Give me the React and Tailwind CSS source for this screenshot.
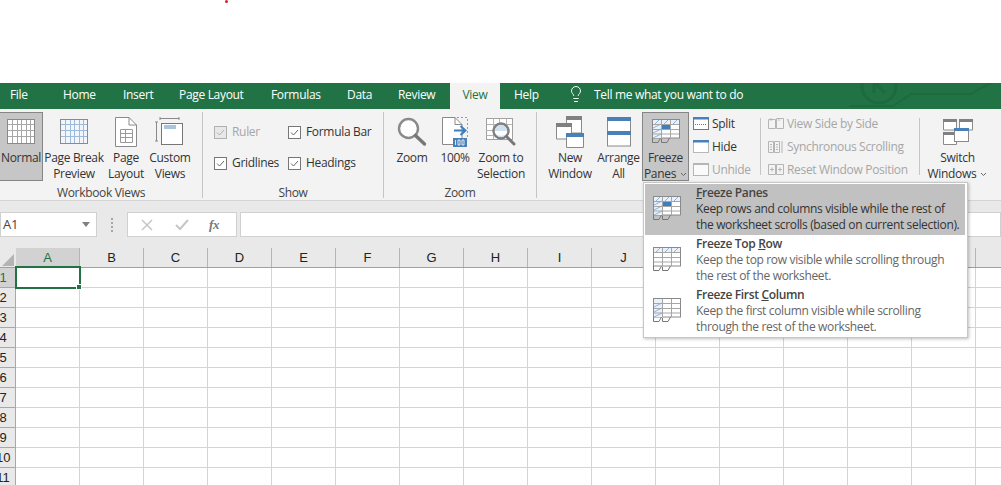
import React from "react";
import { Lightbulb } from "lucide-react";

const columns = ["A", "B", "C", "D", "E", "F", "G", "H", "I", "J", "K", "L", "M", "N", "O", ""];
const rows = [1, 2, 3, 4, 5, 6, 7, 8, 9, 10, 11];
const tabs = [
  { label: "File", width: "w-[53px]" },
  { label: "Home", width: "w-[60px]" },
  { label: "Insert", width: "w-[56px]" },
  { label: "Page Layout", width: "w-[92px]" },
  { label: "Formulas", width: "w-[76px]" },
  { label: "Data", width: "w-[51px]" },
  { label: "Review", width: "w-[52px]" },
];

function GridIcon({ blue }) {
  return (
    <svg width="30" height="30" viewBox="0 0 30 30" fill="none">
      <rect x="1.5" y="2.5" width="27" height="24" fill={blue ? "#f2f6fb" : "#fff"} stroke="#8a8a8a" />
      {[7.5, 13.5, 19.5].map((y) => (
        <path key={y} d={`M2 ${y}H28`} stroke={blue ? "#9db9dc" : "#a6a6a6"} />
      ))}
      {[6.5, 11.5, 15.5, 20.5, 24.5].map((x) => (
        <path key={x} d={`M${x} 3V26`} stroke={blue ? "#9db9dc" : "#a6a6a6"} />
      ))}
    </svg>
  );
}

function PageIcon() {
  return (
    <svg width="26" height="32" viewBox="0 0 26 32" fill="none">
      <path d="M2.5 1.5H16L23.5 9V30.5H2.5Z" fill="#fff" stroke="#8a8a8a" />
      <path d="M16 1.5V9H23.5" stroke="#8a8a8a" />
      <path d="M7.5 13.5H19.5V26.5H7.5ZM7.5 17.5H19.5M7.5 21.5H19.5M12.5 13.5V26.5" stroke="#9a9a9a" />
    </svg>
  );
}

function CustomViewsIcon() {
  return (
    <svg width="30" height="30" viewBox="0 0 30 30" fill="none">
      <path d="M1.5 5V24M0 5H3M0 24H3M5 1.5H24M5 0V3M24 0V3" stroke="#8a8a8a" />
      <rect x="6.5" y="6.5" width="21" height="21" fill="#fff" stroke="#777" />
      <rect x="9" y="8" width="12" height="4" fill="#a9c3e3" />
    </svg>
  );
}

function MagnifierIcon() {
  return (
    <svg width="30" height="30" viewBox="0 0 30 30" fill="none">
      <circle cx="11.5" cy="11.5" r="9.5" fill="#fff" stroke="#8a8a8a" strokeWidth="2.4" />
      <path d="M18.5 18.5L27.5 27" stroke="#777" strokeWidth="3.4" strokeLinecap="round" />
    </svg>
  );
}

function HundredIcon() {
  return (
    <svg width="28" height="32" viewBox="0 0 28 32" fill="none">
      <path d="M1.5 1.5H14L21 8.5V28.5H1.5Z" fill="#fff" stroke="#8a8a8a" />
      <path d="M14 1.5V8.5H21" stroke="#8a8a8a" />
      <path d="M16 1.5H26.5V22" stroke="#9a9a9a" strokeDasharray="2 2" />
      <path d="M13 14.5H24M19.5 10L24.5 14.5L19.5 19" stroke="#3f7ebd" strokeWidth="2" />
      <rect x="12" y="22" width="14" height="9" fill="#4a80b8" />
      <path d="M14.5 24V29M17 24H19V29H17ZM21 24H23V29H21Z" stroke="#fff" strokeWidth="0.8" />
    </svg>
  );
}

function ZoomSelectionIcon() {
  return (
    <svg width="32" height="32" viewBox="0 0 32 32" fill="none">
      <rect x="1.5" y="2.5" width="26" height="21" fill="#fff" stroke="#a0a0a0" />
      <path d="M1.5 8.5H27M1.5 14.5H8M1.5 19.5H8M8.5 2.5V23M14.5 2.5V8M21.5 2.5V8" stroke="#b5b5b5" />
      <circle cx="16" cy="15" r="7.5" fill="#cfe0f1" stroke="#808080" strokeWidth="2" />
      <path d="M9.5 15H22.5V16C21 21 11 21 9.5 16Z" fill="#fff" />
      <circle cx="16" cy="15" r="7.5" stroke="#808080" strokeWidth="2" />
      <path d="M21.5 20.5L29 28" stroke="#777" strokeWidth="3" strokeLinecap="round" />
    </svg>
  );
}

function NewWindowIcon() {
  return (
    <svg width="28" height="32" viewBox="0 0 28 32" fill="none">
      <path d="M10.5 3.5H25.5V17H10.5Z" fill="#fff" stroke="#8a8a8a" />
      <rect x="10" y="0" width="16" height="4" fill="#808080" />
      <path d="M0.5 9.5H15.5V23H0.5Z" fill="#fff" stroke="#8a8a8a" />
      <rect x="0" y="7" width="16" height="4" fill="#808080" />
      <path d="M10.5 18.5H27.5V31.5H10.5Z" fill="#fff" stroke="#8a8a8a" />
      <rect x="10" y="17" width="18" height="4" fill="#4a80b8" />
    </svg>
  );
}

function ArrangeIcon() {
  return (
    <svg width="24" height="30" viewBox="0 0 24 30" fill="none">
      <rect x="0.5" y="0.5" width="23" height="28.5" fill="#fff" stroke="#8a8a8a" />
      <rect x="0" y="0" width="24" height="4" fill="#4a80b8" />
      <rect x="0" y="14" width="24" height="4" fill="#4a80b8" />
    </svg>
  );
}

function FreezeIcon({ mode }) {
  const showTop = mode === "panes" || mode === "top";
  const showLeft = mode === "panes" || mode === "first";
  return (
    <svg width="28" height="25" viewBox="0 0 28 25" fill="none">
      <rect x="0.5" y="0.5" width="27" height="18.5" fill="#fff" stroke="#8a8a8a" />
      {showTop && <rect x="1" y="1" width="26" height="4" fill="#eaf1f9" />}
      {showLeft && <rect x="1" y="1" width="9" height="18" fill="#eaf1f9" />}
      {showTop && <path d="M3 5L7 1M12 5L16 1M21 5L25 1" stroke="#8fb1d8" />}
      {showLeft && <path d="M1 9L9 5M1 14L9 10M1 19L9 15" stroke="#8fb1d8" />}
      <path d="M1 5.5H27M1 10.5H27M1 15H27M9.5 1V19M18.5 1V19" stroke="#a6a6a6" />
      {mode === "panes" && <rect x="10" y="6" width="8" height="4" fill="#3f7ebd" />}
      <path d="M0.5 19V23.5H6L8.5 19M9.5 20V23.5H15L17.5 19" stroke="#777" />
    </svg>
  );
}

function SwitchIcon() {
  return (
    <svg width="30" height="26" viewBox="0 0 30 26" fill="none">
      <path d="M0.5 0.5H13.5V11H0.5ZM16.5 0.5H29.5V11H16.5ZM0.5 13.5H13.5V25.5H0.5Z" fill="#fff" stroke="#8a8a8a" />
      <rect x="0" y="0" width="14" height="3" fill="#808080" />
      <rect x="16" y="0" width="14" height="3" fill="#808080" />
      <rect x="0" y="13" width="14" height="3" fill="#808080" />
      <rect x="11.5" y="9.5" width="14" height="13" fill="#fff" stroke="#8a8a8a" />
      <rect x="11" y="9" width="15" height="3" fill="#4a80b8" />
    </svg>
  );
}

function Chevron() {
  return (
    <svg width="7" height="5" viewBox="0 0 7 5" className="inline-block ml-[4px] align-middle" fill="none">
      <path d="M1 1L3.5 3.5L6 1" stroke="#666" />
    </svg>
  );
}

function CheckBox({ label, disabled }) {
  return (
    <div className={`flex items-center gap-[5px] ${disabled ? "text-[#a6a6a6]" : "text-[#333]"}`}>
      <svg width="13" height="13" viewBox="0 0 13 13" fill="none">
        <rect x="0.5" y="0.5" width="12" height="12" fill={disabled ? "#e8e8e8" : "#fff"} stroke={disabled ? "#b0b0b0" : "#777"} />
        <path d="M3 6.5L5.5 9L10 4" stroke={disabled ? "#b0b0b0" : "#666"} />
      </svg>
      <span>{label}</span>
    </div>
  );
}

function BigButton({ icon, width, active, children }) {
  return (
    <div
      className={`${width} h-[69px] shrink-0 flex flex-col items-center text-center leading-[16px] whitespace-nowrap ${
        active ? "bg-[#c6c6c6] border border-[#868686]" : "border border-transparent"
      }`}
    >
      <div className="h-[37px] shrink-0 flex items-center justify-center">{icon}</div>
      <div className="shrink-0">{children}</div>
    </div>
  );
}

function Group({ label, width, children }) {
  return (
    <div className={`${width} shrink-0 h-[86px] mt-[3px] flex flex-col border-r border-[#c6c6c6]`}>
      <div className="h-[69px] shrink-0 flex">{children}</div>
      <div className="shrink-0 text-center text-[#444] leading-[16px] mt-[4px]">{label}</div>
    </div>
  );
}

function SmallRow({ icon, label, disabled }) {
  return (
    <div className={`h-[23px] flex items-center gap-[3px] ${disabled ? "text-[#a6a6a6]" : "text-[#333]"}`}>
      {icon}
      <span>{label}</span>
    </div>
  );
}

function MenuItem({ mode, title, active, lines }) {
  return (
    <div className={`h-[51px] flex pl-[8px] tracking-[-0.34px] ${active ? "bg-[#c1c1c1] text-[#333]" : "text-[#666]"}`}>
      <div className="w-[43px] shrink-0 pt-[12px]">
        <FreezeIcon mode={mode} />
      </div>
      <div className="leading-[16px] pt-[1px]">
        <div className="font-semibold text-[#444]">{title}</div>
        {lines.map((line) => (
          <div key={line} className="whitespace-nowrap">{line}</div>
        ))}
      </div>
    </div>
  );
}

export default function App() {
  return (
    <div className="relative h-[485px] w-[1001px] overflow-hidden bg-white text-[12px] font-['Open_Sans',sans-serif] tracking-[-0.32px]">
      <div className="h-[83px] flex">
        <div className="ml-[225px] w-[3px] h-[3px] rounded-full bg-[#d0202e]" />
      </div>

      {/* tabs */}
      <div className="relative h-[26px] flex bg-[#217346] text-white leading-[24px] overflow-hidden">
        <svg className="absolute right-0 top-0" width="200" height="26" viewBox="0 0 200 26" fill="none">
          <circle cx="78" cy="3" r="17" stroke="#1c6a3e" strokeWidth="3" />
          <path d="M73 -6V10M73 3L82 -4M76 2L84 10" stroke="#1c6a3e" strokeWidth="3" />
          <path d="M48 23H92L110 11H170L196 -4" stroke="#1c6a3e" strokeWidth="2" />
        </svg>
        <div className="w-[10px] shrink-0" />
        {tabs.map((tab) => (
          <div key={tab.label} className={`${tab.width} shrink-0`}>{tab.label}</div>
        ))}
        <div className="w-[50px] shrink-0 bg-[#f3f3f3] text-[#217346] text-center">View</div>
        <div className="w-[67px] shrink-0 pl-[14px]">Help</div>
        <div className="relative flex items-start">
          <Lightbulb size={18} strokeWidth={1.3} className="mt-[2px]" />
          <span className="ml-[9px]">Tell me what you want to do</span>
        </div>
      </div>

      {/* ribbon */}
      <div className="h-[92px] flex bg-[#f3f3f3] text-[#333] border-b border-[#d4d4d4]">
        <Group label="Workbook Views" width="w-[203px]">
          <BigButton width="w-[44px] -ml-[1px]" active icon={<GridIcon />}>Normal</BigButton>
          <BigButton width="w-[62px]" icon={<GridIcon blue />}>Page Break<br />Preview</BigButton>
          <BigButton width="w-[42px]" icon={<PageIcon />}>Page<br />Layout</BigButton>
          <BigButton width="w-[46px]" icon={<CustomViewsIcon />}>Custom<br />Views</BigButton>
        </Group>
        <Group label="Show" width="w-[181px]">
          <div className="grid grid-cols-[74px_90px] gap-y-[13px] pl-[11px] pt-[11px] h-fit">
            <CheckBox label="Ruler" disabled />
            <CheckBox label="Formula Bar" />
            <CheckBox label="Gridlines" />
            <CheckBox label="Headings" />
          </div>
        </Group>
        <Group label="Zoom" width="w-[153px]">
          <BigButton width="w-[44px] ml-[6px]" icon={<MagnifierIcon />}>Zoom</BigButton>
          <BigButton width="w-[42px]" icon={<HundredIcon />}>100%</BigButton>
          <BigButton width="w-[50px]" icon={<ZoomSelectionIcon />}>Zoom to<br />Selection</BigButton>
        </Group>
        <div className="w-[459px] shrink-0 h-[88px] mt-[3px] flex">
          <BigButton width="w-[50px] ml-[8px]" icon={<NewWindowIcon />}>New<br />Window</BigButton>
          <BigButton width="w-[47px]" icon={<ArrangeIcon />}>Arrange<br />All</BigButton>
          <BigButton width="w-[47px]" active icon={<FreezeIcon mode="panes" />}>
            Freeze<br />Panes<Chevron />
          </BigButton>
          <div className="w-[71px] shrink-0 pl-[4px] h-[69px]">
            <SmallRow
              label="Split"
              icon={
                <svg width="16" height="13" viewBox="0 0 16 13" fill="none">
                  <rect x="0.5" y="0.5" width="15" height="12" fill="#fff" stroke="#777" />
                  <rect x="0" y="0" width="16" height="2.5" fill="#4a80b8" />
                  <path d="M2 7.5H14" stroke="#4a80b8" strokeDasharray="1 1" />
                </svg>
              }
            />
            <SmallRow
              label="Hide"
              icon={
                <svg width="16" height="13" viewBox="0 0 16 13" fill="none">
                  <rect x="0.5" y="0.5" width="15" height="12" fill="#fff" stroke="#777" strokeDasharray="1 1" />
                  <rect x="0" y="0" width="16" height="2.5" fill="#4a80b8" />
                </svg>
              }
            />
            <SmallRow
              disabled
              label="Unhide"
              icon={
                <svg width="16" height="13" viewBox="0 0 16 13" fill="none">
                  <rect x="0.5" y="0.5" width="15" height="12" fill="#fafafa" stroke="#b5b5b5" />
                  <rect x="0" y="0" width="16" height="2" fill="#b5b5b5" />
                </svg>
              }
            />
          </div>
          <div className="w-px h-[57px] mt-[6px] shrink-0 bg-[#c6c6c6]" />
          <div className="w-[158px] shrink-0 pl-[7px] h-[69px]">
            <SmallRow
              disabled
              label="View Side by Side"
              icon={
                <svg width="16" height="13" viewBox="0 0 16 13" fill="none">
                  <path d="M0.5 2.5H7.5V11.5H0.5ZM8.5 1.5H15.5V11.5H8.5ZM3 1V4M11 1V4" stroke="#b5b5b5" />
                </svg>
              }
            />
            <SmallRow
              disabled
              label="Synchronous Scrolling"
              icon={
                <svg width="16" height="14" viewBox="0 0 16 14" fill="none">
                  <path d="M0.5 1.5H5.5V12.5H0.5ZM6.5 1.5H11.5V12.5H6.5ZM14 1V13M8 4.5H10M8 7H10M8 9.5H10M2 4.5H4M2 7H4M2 9.5H4" stroke="#b5b5b5" />
                </svg>
              }
            />
            <SmallRow
              disabled
              label="Reset Window Position"
              icon={
                <svg width="16" height="13" viewBox="0 0 16 13" fill="none">
                  <path d="M0.5 1.5H7.5V11.5H0.5ZM8.5 1.5H15.5V11.5H8.5ZM2 6.5H6M10 6.5H14M4 4.5V8.5M12 4.5V8.5" stroke="#b5b5b5" />
                </svg>
              }
            />
          </div>
          <div className="w-px h-[57px] mt-[6px] shrink-0 bg-[#c6c6c6]" />
          <BigButton width="w-[75px]" icon={<SwitchIcon />}>
            Switch<br />Windows<Chevron />
          </BigButton>
          <div className="w-px h-[84px] ml-[1px] bg-[#c6c6c6]" />
        </div>
      </div>

      {/* formula bar */}
      <div className="h-[47px] flex items-center bg-[#e9e9e9]">
        <div className="w-[97px] h-[25px] shrink-0 flex items-center justify-between bg-white border border-[#d0d0d0] pl-[2px] pr-[6px] text-[13px] text-[#444]">
          <span>A1</span>
          <svg width="8" height="5" viewBox="0 0 8 5"><path d="M0 0H8L4 5Z" fill="#808080" /></svg>
        </div>
        <div className="w-[30px] shrink-0 flex flex-col items-center gap-[2px]">
          <span className="w-[2px] h-[2px] bg-[#a6a6a6]" />
          <span className="w-[2px] h-[2px] bg-[#a6a6a6]" />
          <span className="w-[2px] h-[2px] bg-[#a6a6a6]" />
          <span className="w-[2px] h-[2px] bg-[#a6a6a6]" />
        </div>
        <div className="w-[110px] h-[25px] shrink-0 flex items-center bg-white border border-[#d0d0d0] pl-[13px] gap-[22px]">
          <svg width="12" height="12" viewBox="0 0 12 12" fill="none"><path d="M1 1L11 11M11 1L1 11" stroke="#c6c6c6" strokeWidth="1.5" /></svg>
          <svg width="14" height="12" viewBox="0 0 14 12" fill="none"><path d="M1 6L5 10L13 1" stroke="#c6c6c6" strokeWidth="2" /></svg>
          <span className="font-['Liberation_Serif',serif] italic font-bold text-[#777] text-[13px] -ml-[2px]">fx</span>
        </div>
        <div className="ml-[3px] flex-1 h-[25px] bg-white border border-[#d0d0d0]" />
      </div>

      {/* sheet */}
      <div className="font-['Liberation_Sans',sans-serif] text-[13px] tracking-normal">
        <div className="h-[20px] flex bg-[#e9e9e9] border-b border-[#a0a0a0]">
          <div className="w-[16px] shrink-0 flex items-end justify-end pr-[2px] pb-[1px]">
            <svg width="12" height="12" viewBox="0 0 12 12"><path d="M12 0V12H0Z" fill="#b4b4b4" /></svg>
          </div>
          {columns.map((col, i) => (
            <div
              key={i}
              className={`w-[64px] shrink-0 text-center leading-[20px] border-r border-[#b5b5b5] ${
                i === 0 ? "bg-[#d2d2d2] text-[#217346]" : "text-[#222]"
              }`}
            >
              {col}
            </div>
          ))}
        </div>
        {rows.map((row, i) => (
          <div key={row} className="h-[20px] flex border-b border-[#d4d4d4]">
            <div
              className={`w-[16px] shrink-0 overflow-hidden flex leading-[19px] border-r border-b -mb-px border-[#a8a8a8] ${
                i === 0 ? "bg-[#d2d2d2] text-[#217346]" : "bg-[#e9e9e9] text-[#222]"
              }`}
            >
              <span className="w-[14px] -ml-[4px] shrink-0 text-center">{row}</span>
            </div>
            {columns.map((col, c) => (
              <div key={c} className="w-[64px] shrink-0 border-r border-[#d4d4d4]" />
            ))}
          </div>
        ))}
      </div>

      {/* selected cell */}
      <div className="absolute left-[15px] top-[266px] w-[66px] h-[23px] border-2 border-[#217346]">
        <div className="absolute -right-[3px] -bottom-[3px] w-[6px] h-[6px] bg-[#217346] border border-white" />
      </div>

      {/* freeze panes menu */}
      <div className="absolute left-[643px] top-[182px] w-[325px] h-[156px] bg-white border border-[#c6c6c6] shadow-[1px_1px_3px_rgba(0,0,0,0.25)] p-px pr-[2px]">
        <MenuItem
          mode="panes"
          active
          title={<><span className="underline">F</span>reeze Panes</>}
          lines={["Keep rows and columns visible while the rest of", "the worksheet scrolls (based on current selection)."]}
        />
        <MenuItem
          mode="top"
          title={<>Freeze Top <span className="underline">R</span>ow</>}
          lines={["Keep the top row visible while scrolling through", "the rest of the worksheet."]}
        />
        <MenuItem
          mode="first"
          title={<>Freeze First <span className="underline">C</span>olumn</>}
          lines={["Keep the first column visible while scrolling", "through the rest of the worksheet."]}
        />
      </div>
    </div>
  );
}
